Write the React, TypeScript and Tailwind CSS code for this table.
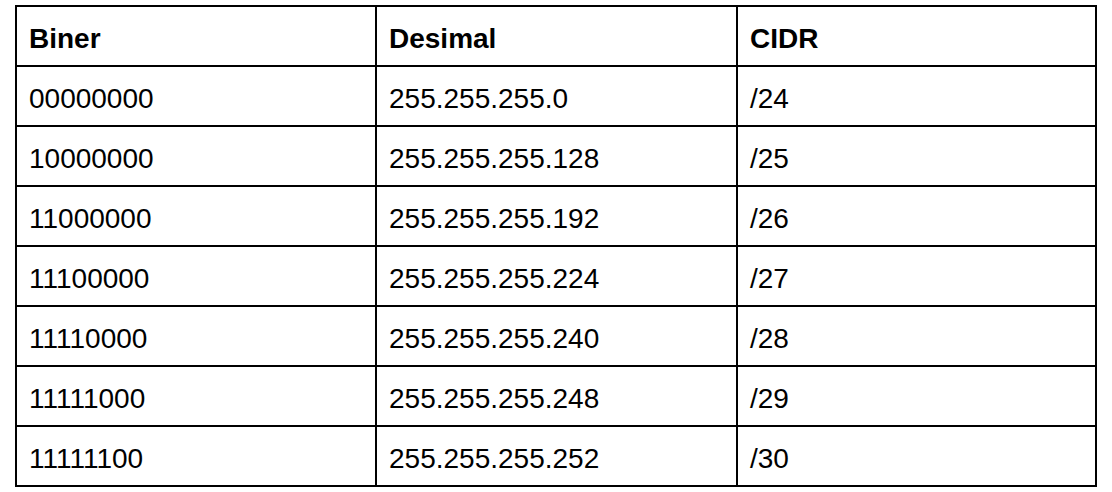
const rows: [string, string, string][] = [
  ["00000000", "255.255.255.0", "/24"],
  ["10000000", "255.255.255.128", "/25"],
  ["11000000", "255.255.255.192", "/26"],
  ["11100000", "255.255.255.224", "/27"],
  ["11110000", "255.255.255.240", "/28"],
  ["11111000", "255.255.255.248", "/29"],
  ["11111100", "255.255.255.252", "/30"],
];

const Cell = ({ children, bold, last }: { children: string; bold?: boolean; last?: boolean }) => (
  <div
    className={`flex h-[58px] items-center pl-3 pt-[5px] ${last ? "" : "border-r-2 border-black"} ${
      bold ? "font-bold" : ""
    }`}
  >
    {children}
  </div>
);

export default function App() {
  return (
    <div className="h-[492px] w-[1112px] bg-white pl-[15px] pt-[5px] text-[28px] leading-none text-black font-['Liberation_Sans',Arial,sans-serif]">
      <div className="w-[1082px] border-2 border-black">
        <div className="grid grid-cols-[360px_361px_357px] border-b-2 border-black">
          <Cell bold>Biner</Cell>
          <Cell bold>Desimal</Cell>
          <Cell bold last>
            CIDR
          </Cell>
        </div>
        {rows.map((r, i) => (
          <div
            key={i}
            className={`grid grid-cols-[360px_361px_357px] ${i < rows.length - 1 ? "border-b-2 border-black" : ""}`}
          >
            <Cell>{r[0]}</Cell>
            <Cell>{r[1]}</Cell>
            <Cell last>{r[2]}</Cell>
          </div>
        ))}
      </div>
    </div>
  );
}
